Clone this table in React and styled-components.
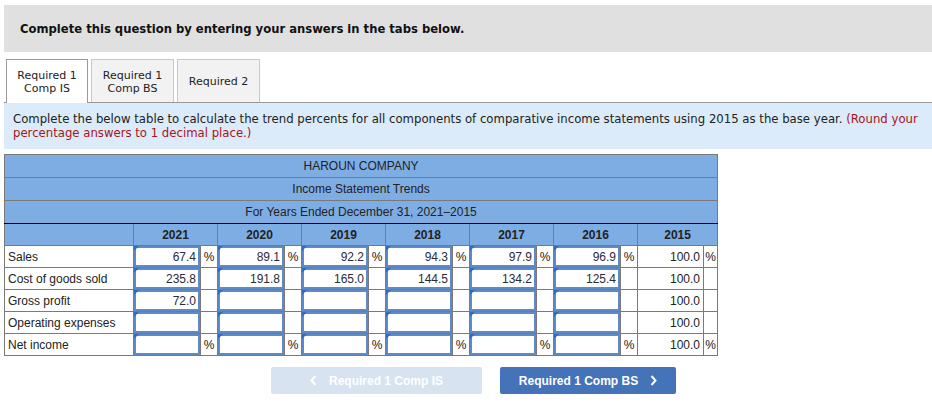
import React from 'react';
import styled, { createGlobalStyle } from 'styled-components';

const GlobalStyle = createGlobalStyle`
  body {
    margin: 0;
    background: #fff;
    font-family: "DejaVu Sans", Verdana, sans-serif;
  }
`;

const Page = styled.div`
  padding: 5px 0 0 4px;
  width: 928px;
`;

const Banner = styled.div`
  background: #e0e0e0;
  height: 47px;
  display: flex;
  align-items: center;
  padding-left: 16px;
  font-size: 11.6px;
  font-weight: bold;
  color: #111;
`;

const TabBar = styled.div`
  display: flex;
  gap: 3px;
  margin-top: 7px;
  padding-left: 2px;
  border-bottom: 1px solid #9a9a9a;
`;

const Tab = styled.div`
  width: ${(p) => p.$w}px;
  box-sizing: border-box;
  display: flex;
  align-items: center;
  justify-content: center;
  text-align: center;
  font-size: 11px;
  line-height: 13px;
  color: #222;
  border: 1px solid ${(p) => (p.$active ? '#9a9a9a' : '#c8c8c8')};
  border-bottom: none;
  background: ${(p) => (p.$active ? '#fff' : '#f2f2f2')};
  margin-bottom: ${(p) => (p.$active ? '-1px' : '0')};
  height: ${(p) => (p.$active ? '44px' : '43px')};
  padding-top: 1px;
`;

const Instructions = styled.div`
  background: #dcebf9;
  padding: 9px 6px 9px 9px;
  font-size: 11.7px;
  line-height: 14px;
  color: #222;
`;

const Hint = styled.span`
  color: #a8141c;
`;

const Table = styled.table`
  margin-top: 5px;
  border-collapse: collapse;
  width: 713px;
  table-layout: fixed;
  font-family: "Liberation Sans", Arial, sans-serif;
  font-size: 12px;
  color: #222;
  border: 1px solid #7a7a7a;
`;

const TitleCell = styled.td`
  background: #7eade4;
  text-align: center;
  height: 22px;
  padding: 0;
  border: 1px solid #7a7a7a;
  border-bottom: ${(p) => (p.$last ? '1px solid #000' : '1px solid #7a7a7a')};
`;

const YearCell = styled.td`
  background: #7eade4;
  text-align: center;
  font-weight: bold;
  height: 21px;
  padding: 0;
  border: 1px solid #7a7a7a;
  border-top: 1px solid #000;
`;

const LabelCell = styled.td`
  padding: 0 0 0 3px;
  height: 21px;
  border: 1px solid #7a7a7a;
  white-space: nowrap;
`;

const ValueCell = styled.td`
  padding: 0;
  height: 21px;
  border: 1px solid #7a7a7a;
  border-right: none;
  text-align: right;
  padding-right: ${(p) => (p.$plain ? '3px' : '0')};
`;

const PctCell = styled.td`
  padding: 0;
  height: 21px;
  border: 1px solid #7a7a7a;
  text-align: center;
`;

const InputWrap = styled.div`
  position: relative;
  &::before {
    content: '';
    position: absolute;
    z-index: 1;
    left: 0;
    top: 0;
    border-top: 5px solid #2f6cc4;
    border-right: 5px solid transparent;
  }
`;

const AnswerInput = styled.input`
  display: block;
  width: 100%;
  height: 21px;
  box-sizing: border-box;
  border: 2px solid #5f8ac8;
  background: #fff;
  text-align: right;
  padding: 0 2px 0 0;
  font-family: "Liberation Sans", Arial, sans-serif;
  font-size: 12px;
  color: #2a2a3a;
  outline: none;
`;

const Footer = styled.div`
  display: flex;
  justify-content: center;
  gap: 18px;
  margin-top: 11px;
  padding-left: 11px;
`;

const NavButton = styled.button`
  width: ${(p) => p.$w}px;
  height: 27px;
  border: none;
  border-radius: 2px;
  background: ${(p) => (p.$disabled ? '#d7e3f1' : '#4473b9')};
  color: #fff;
  font-family: "Liberation Sans", Arial, sans-serif;
  font-size: 12px;
  font-weight: bold;
  display: flex;
  align-items: center;
  justify-content: center;
  gap: 12px;
  padding: 0;
  cursor: ${(p) => (p.$disabled ? 'default' : 'pointer')};
`;

const Chevron = ({ dir }) => (
  <svg width="7" height="11" viewBox="0 0 7 11">
    <path
      d={dir === 'left' ? 'M5.5 1 L1.5 5.5 L5.5 10' : 'M1.5 1 L5.5 5.5 L1.5 10'}
      fill="none"
      stroke="#fff"
      strokeWidth="2"
    />
  </svg>
);

const years = ['2021', '2020', '2019', '2018', '2017', '2016'];

const rows = [
  { label: 'Sales', pct: true, values: ['67.4', '89.1', '92.2', '94.3', '97.9', '96.9'] },
  { label: 'Cost of goods sold', values: ['235.8', '191.8', '165.0', '144.5', '134.2', '125.4'] },
  { label: 'Gross profit', values: ['72.0', '', '', '', '', ''] },
  { label: 'Operating expenses', values: ['', '', '', '', '', ''] },
  { label: 'Net income', pct: true, values: ['', '', '', '', '', ''] },
];

export default function App() {
  return (
    <>
      <GlobalStyle />
      <Page>
        <Banner>Complete this question by entering your answers in the tabs below.</Banner>
        <TabBar>
          <Tab $w={82} $active>
            Required 1<br />Comp IS
          </Tab>
          <Tab $w={83}>
            Required 1<br />Comp BS
          </Tab>
          <Tab $w={83}>Required 2</Tab>
        </TabBar>
        <Instructions>
          Complete the below table to calculate the trend percents for all components of comparative income
          statements using 2015 as the base year. <Hint>(Round your percentage answers to 1 decimal place.)</Hint>
        </Instructions>
        <Table>
          <colgroup>
            <col style={{ width: 129 }} />
            {years.map((y) => (
              <React.Fragment key={y}>
                <col style={{ width: 67 }} />
                <col style={{ width: 17 }} />
              </React.Fragment>
            ))}
            <col style={{ width: 66 }} />
            <col style={{ width: 14 }} />
          </colgroup>
          <tbody>
            <tr>
              <TitleCell colSpan={15}>HAROUN COMPANY</TitleCell>
            </tr>
            <tr>
              <TitleCell colSpan={15}>Income Statement Trends</TitleCell>
            </tr>
            <tr>
              <TitleCell colSpan={15} $last>
                For Years Ended December 31, 2021–2015
              </TitleCell>
            </tr>
            <tr>
              <YearCell />
              {[...years, '2015'].map((y) => (
                <YearCell key={y} colSpan={2}>
                  {y}
                </YearCell>
              ))}
            </tr>
            {rows.map((r) => (
              <tr key={r.label}>
                <LabelCell>{r.label}</LabelCell>
                {r.values.map((v, i) => (
                  <React.Fragment key={i}>
                    <ValueCell>
                      <InputWrap>
                        <AnswerInput readOnly value={v} />
                      </InputWrap>
                    </ValueCell>
                    <PctCell>{r.pct ? '%' : ''}</PctCell>
                  </React.Fragment>
                ))}
                <ValueCell $plain>100.0</ValueCell>
                <PctCell>{r.pct ? '%' : ''}</PctCell>
              </tr>
            ))}
          </tbody>
        </Table>
        <Footer>
          <NavButton $w={211} $disabled>
            <Chevron dir="left" />
            Required 1 Comp IS
          </NavButton>
          <NavButton $w={176}>
            Required 1 Comp BS
            <Chevron dir="right" />
          </NavButton>
        </Footer>
      </Page>
    </>
  );
}
